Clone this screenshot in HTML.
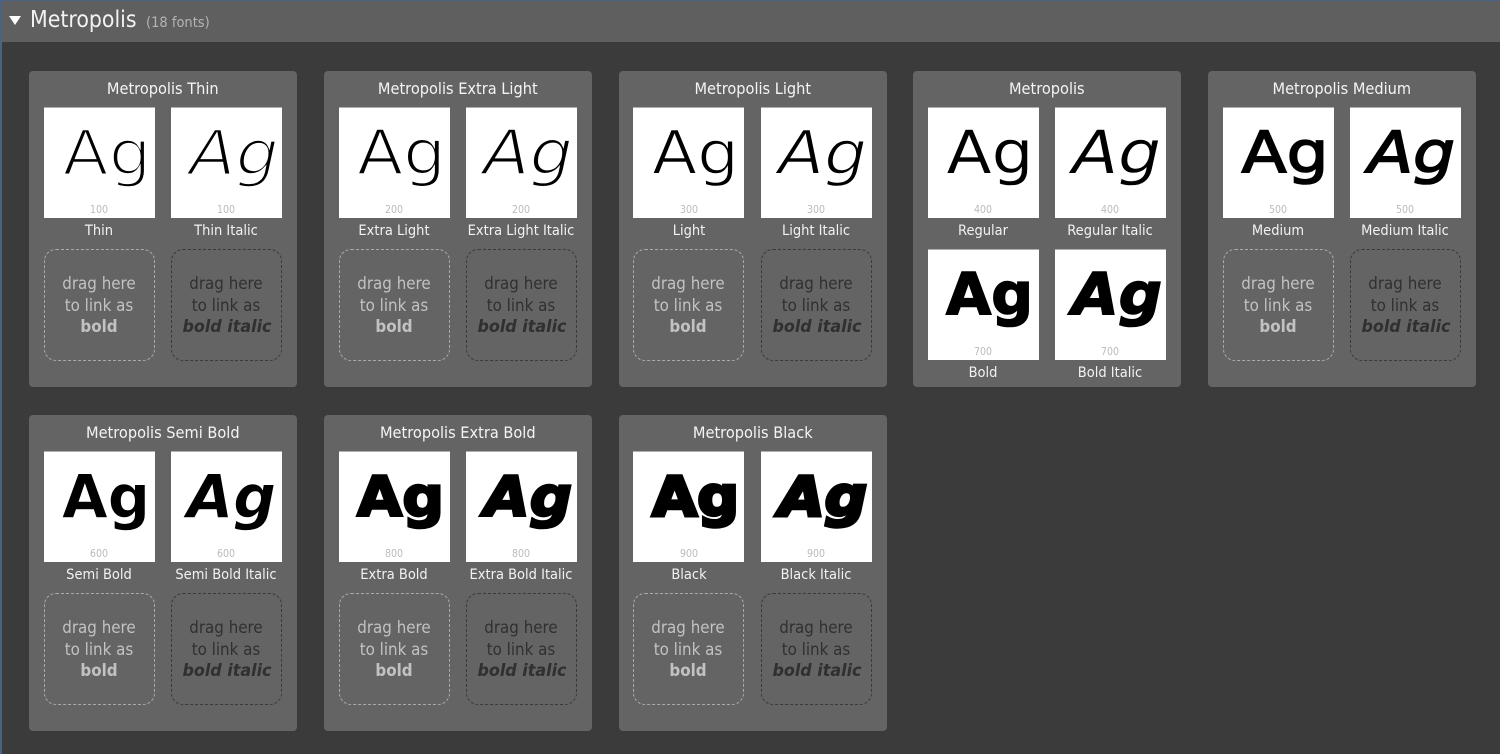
<!DOCTYPE html>
<html><head><meta charset="utf-8"><style>
html,body{margin:0;padding:0;background:#3b3b3b}
body{position:relative;width:1500px;height:754px;overflow:hidden;font-family:"DejaVu Sans","Liberation Sans",sans-serif}
.hd{position:absolute;left:0;top:0;width:1500px;height:42px;background:#5f5f5f}
.bl{position:absolute;left:0;top:0;width:2px;height:754px;background:#4a6286}
.bt{position:absolute;left:0;top:0;width:1500px;height:1px;background:#4a6286}
.tri{position:absolute;left:9px;top:16px;width:0;height:0;border-left:6.5px solid transparent;border-right:6.5px solid transparent;border-top:9px solid #fff}
.x{position:absolute;white-space:nowrap;text-align:center;transform:scaleX(.9)}
.h1{left:30px;top:5px;font-size:22.8px;line-height:30px;color:#f2f2f2;transform-origin:0 0}
.h2{left:146px;top:14px;font-size:14.5px;line-height:18px;color:#b4b4b4;transform-origin:0 0}
.c{position:absolute;width:267.6px;height:316px;background:#646464;border-radius:4px}
.t{left:0;width:267.6px;top:8px;font-size:16.2px;line-height:20px;color:#f4f4f4}
.i{position:absolute;width:111px;height:110px;background:#fff;top:37px;display:block;box-shadow:0 -1px 0 #b0b0b0}
.a{left:15px}.b{left:142px}
.c3 .a{left:14px}
.r2{top:179px}
.w{position:absolute;top:132px;width:160px;font-size:10.5px;line-height:14px;color:#bbb;text-align:center;transform:scaleX(.9)}
.l{width:160px;top:151px;font-size:14.5px;line-height:18px;color:#f2f2f2}
.la{left:-10px}.lb{left:117px}
.d{position:absolute;top:178px;width:109px;height:110px;border:1px dashed #aaa;border-radius:12px}
.db{border-color:#3a3a3a}
.d div{position:absolute;left:-26px;width:160px;text-align:center;font-size:16.8px;line-height:21px;transform:scaleX(.9);white-space:nowrap;color:#c2c2c2}
.db div{color:#303030}
.d .m{font-weight:bold}
.db .m{left:-25px;font-style:italic;transform:scaleX(.95)}
text{font-family:"DejaVu Sans",sans-serif;fill:#000}
.w1{font-size:62.5px;stroke:#fff;stroke-width:2.6}
.w2{font-size:62px;stroke:#fff;stroke-width:2.1}
.w3{font-size:61px;stroke:#fff;stroke-width:1.5}
.w4{font-size:59.5px;stroke:#fff;stroke-width:.4}
.w5{font-size:56.8px;stroke:#000;stroke-width:1.6}
.w6{font-size:59.5px;font-weight:bold;stroke:#fff;stroke-width:.6}
.w7{font-size:57.5px;font-weight:bold;stroke:#000;stroke-width:1.6}
.w8{font-size:55.5px;font-weight:bold;stroke:#000;stroke-width:2.6}
.w9{font-size:54.5px;font-weight:bold;stroke:#000;stroke-width:3.4}
.it{font-style:italic}
</style></head><body>
<div class="hd"></div><div class="bl"></div><div class="bt"></div><div class="tri"></div>
<div class="x h1">Metropolis</div><div class="x h2">(18 fonts)</div>

<div class="c" style="left:29px;top:71px">
<div class="x t">Metropolis Thin</div>
<svg class="i a"><text class="w1" x="18.5" y="66.3" textLength="89" lengthAdjust="spacingAndGlyphs">Ag</text></svg>
<svg class="i b"><text class="w1 it" x="18" y="66.3" textLength="90" lengthAdjust="spacingAndGlyphs">Ag</text></svg>
<div class="w" style="left:-10px">100</div><div class="w" style="left:117px">100</div>
<div class="x l la">Thin</div><div class="x l lb">Thin Italic</div>
<div class="d a"><div style="top:23px">drag here</div><div style="top:45px">to link as</div><div class="m" style="top:66px">bold</div></div>
<div class="d b db"><div style="top:23px">drag here</div><div style="top:45px">to link as</div><div class="m" style="top:66px">bold italic</div></div>
</div>

<div class="c" style="left:324px;top:71px">
<div class="x t">Metropolis Extra Light</div>
<svg class="i a"><text class="w2" x="18" y="66" textLength="89" lengthAdjust="spacingAndGlyphs">Ag</text></svg>
<svg class="i b"><text class="w2 it" x="17" y="66" textLength="90" lengthAdjust="spacingAndGlyphs">Ag</text></svg>
<div class="w" style="left:-10px">200</div><div class="w" style="left:117px">200</div>
<div class="x l la">Extra Light</div><div class="x l lb">Extra Light Italic</div>
<div class="d a"><div style="top:23px">drag here</div><div style="top:45px">to link as</div><div class="m" style="top:66px">bold</div></div>
<div class="d b db"><div style="top:23px">drag here</div><div style="top:45px">to link as</div><div class="m" style="top:66px">bold italic</div></div>
</div>

<div class="c c3" style="left:619px;top:71px">
<div class="x t">Metropolis Light</div>
<svg class="i a"><text class="w3" x="19" y="65.8" textLength="87" lengthAdjust="spacingAndGlyphs">Ag</text></svg>
<svg class="i b"><text class="w3 it" x="17" y="65.8" textLength="89" lengthAdjust="spacingAndGlyphs">Ag</text></svg>
<div class="w" style="left:-10px">300</div><div class="w" style="left:117px">300</div>
<div class="x l la">Light</div><div class="x l lb">Light Italic</div>
<div class="d a"><div style="top:23px">drag here</div><div style="top:45px">to link as</div><div class="m" style="top:66px">bold</div></div>
<div class="d b db"><div style="top:23px">drag here</div><div style="top:45px">to link as</div><div class="m" style="top:66px">bold italic</div></div>
</div>

<div class="c" style="left:913.4px;top:71px">
<div class="x t">Metropolis</div>
<svg class="i a"><text class="w4" x="18.5" y="65.2" textLength="87" lengthAdjust="spacingAndGlyphs">Ag</text></svg>
<svg class="i b"><text class="w4 it" x="17" y="65.2" textLength="89" lengthAdjust="spacingAndGlyphs">Ag</text></svg>
<div class="w" style="left:-10px">400</div><div class="w" style="left:117px">400</div>
<div class="x l la">Regular</div><div class="x l lb">Regular Italic</div>
<svg class="i a r2"><text class="w7" x="18" y="64.2" textLength="87" lengthAdjust="spacingAndGlyphs">Ag</text></svg>
<svg class="i b r2"><text class="w7 it" x="17" y="64.2" textLength="90" lengthAdjust="spacingAndGlyphs">Ag</text></svg>
<div class="w" style="left:-10px;top:274px">700</div><div class="w" style="left:117px;top:274px">700</div>
<div class="x l la" style="top:293px">Bold</div><div class="x l lb" style="top:293px">Bold Italic</div>
</div>

<div class="c" style="left:1208px;top:71px">
<div class="x t">Metropolis Medium</div>
<svg class="i a"><text class="w5" x="18.5" y="64.2" textLength="87" lengthAdjust="spacingAndGlyphs">Ag</text></svg>
<svg class="i b"><text class="w5 it" x="18" y="64.2" textLength="87" lengthAdjust="spacingAndGlyphs">Ag</text></svg>
<div class="w" style="left:-10px">500</div><div class="w" style="left:117px">500</div>
<div class="x l la">Medium</div><div class="x l lb">Medium Italic</div>
<div class="d a"><div style="top:23px">drag here</div><div style="top:45px">to link as</div><div class="m" style="top:66px">bold</div></div>
<div class="d b db"><div style="top:23px">drag here</div><div style="top:45px">to link as</div><div class="m" style="top:66px">bold italic</div></div>
</div>

<div class="c" style="left:29px;top:415px">
<div class="x t">Metropolis Semi Bold</div>
<svg class="i a"><text class="w6" x="18" y="65.3" textLength="88" lengthAdjust="spacingAndGlyphs">Ag</text></svg>
<svg class="i b"><text class="w6 it" x="16" y="65.3" textLength="89" lengthAdjust="spacingAndGlyphs">Ag</text></svg>
<div class="w" style="left:-10px">600</div><div class="w" style="left:117px">600</div>
<div class="x l la">Semi Bold</div><div class="x l lb">Semi Bold Italic</div>
<div class="d a"><div style="top:23px">drag here</div><div style="top:45px">to link as</div><div class="m" style="top:66px">bold</div></div>
<div class="d b db"><div style="top:23px">drag here</div><div style="top:45px">to link as</div><div class="m" style="top:66px">bold italic</div></div>
</div>

<div class="c" style="left:324px;top:415px">
<div class="x t">Metropolis Extra Bold</div>
<svg class="i a"><text class="w8" x="18" y="63.8" textLength="87" lengthAdjust="spacingAndGlyphs">Ag</text></svg>
<svg class="i b"><text class="w8 it" x="18" y="63.8" textLength="88" lengthAdjust="spacingAndGlyphs">Ag</text></svg>
<div class="w" style="left:-10px">800</div><div class="w" style="left:117px">800</div>
<div class="x l la">Extra Bold</div><div class="x l lb">Extra Bold Italic</div>
<div class="d a"><div style="top:23px">drag here</div><div style="top:45px">to link as</div><div class="m" style="top:66px">bold</div></div>
<div class="d b db"><div style="top:23px">drag here</div><div style="top:45px">to link as</div><div class="m" style="top:66px">bold italic</div></div>
</div>

<div class="c c3" style="left:619px;top:415px">
<div class="x t">Metropolis Black</div>
<svg class="i a"><text class="w9" x="19" y="63.3" textLength="87" lengthAdjust="spacingAndGlyphs">Ag</text></svg>
<svg class="i b"><text class="w9 it" x="18" y="63.3" textLength="88" lengthAdjust="spacingAndGlyphs">Ag</text></svg>
<div class="w" style="left:-10px">900</div><div class="w" style="left:117px">900</div>
<div class="x l la">Black</div><div class="x l lb">Black Italic</div>
<div class="d a"><div style="top:23px">drag here</div><div style="top:45px">to link as</div><div class="m" style="top:66px">bold</div></div>
<div class="d b db"><div style="top:23px">drag here</div><div style="top:45px">to link as</div><div class="m" style="top:66px">bold italic</div></div>
</div>
</body></html>
